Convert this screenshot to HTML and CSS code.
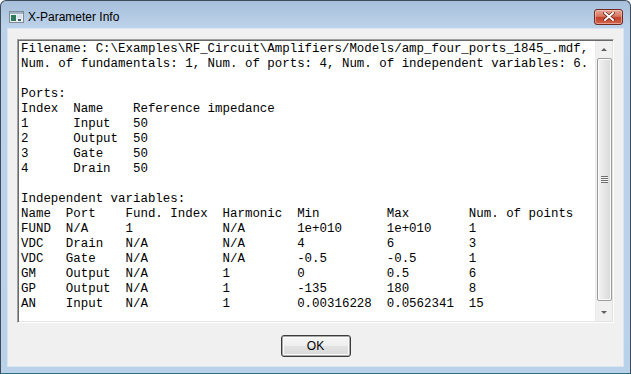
FILE: index.html
```html
<!DOCTYPE html>
<html lang="en">
<head>
    <meta charset="UTF-8">
    <title>X-Parameter Info</title>
    <link rel="stylesheet" href="styles.css">
</head>
<body>

    <div class="window">
        <div class="titlebar">
            <svg class="app-icon" width="15" height="12" viewBox="0 0 15 12">
                <rect x="0.5" y="0.5" width="14" height="11" fill="#e9eef3" stroke="#7d8b97"/>
                <rect x="1" y="1" width="13" height="2" fill="#9fb3c6"/>
                <rect x="2" y="4" width="5" height="6" fill="#2f7a5a"/>
                <rect x="8" y="4" width="5" height="3" fill="#d6e2ec"/>
                <rect x="9" y="8" width="3" height="2" fill="#4a5f73"/>
            </svg>
            <span class="title">X-Parameter Info</span>
            <button class="close" title="Close">
                <svg width="12" height="9" viewBox="0 0 12 9">
                    <path d="M2 1 L10 8 M10 1 L2 8" stroke="#5a1c14" stroke-width="3.2" stroke-linecap="square"/>
                    <path d="M2 1 L10 8 M10 1 L2 8" stroke="#ffffff" stroke-width="2" stroke-linecap="square"/>
                </svg>
            </button>
        </div>

        <div class="client">
            <div class="textbox">
<pre class="info">Filename: C:\Examples\RF_Circuit\Amplifiers/Models/amp_four_ports_1845_.mdf,
Num. of fundamentals: 1, Num. of ports: 4, Num. of independent variables: 6.

Ports:
Index  Name    Reference impedance
1      Input   50
2      Output  50
3      Gate    50
4      Drain   50

Independent variables:
Name  Port    Fund. Index  Harmonic  Min         Max        Num. of points
FUND  N/A     1            N/A       1e+010      1e+010     1
VDC   Drain   N/A          N/A       4           6          3
VDC   Gate    N/A          N/A       -0.5        -0.5       1
GM    Output  N/A          1         0           0.5        6
GP    Output  N/A          1         -135        180        8
AN    Input   N/A          1         0.00316228  0.0562341  15</pre>
                <div class="scrollbar">
                    <div class="arrow"><span class="tri up"></span></div>
                    <div class="thumb"><span class="grip"></span></div>
                    <div class="arrow"><span class="tri down"></span></div>
                </div>
            </div>
            <div class="footer">
                <button class="ok">OK</button>
            </div>
        </div>
    </div>

</body>
</html>
```

FILE: styles.css
```css
body {
    margin: 0;
    background: #ffffff;
}
.window {
    width: 631px;
    height: 374px;
    box-sizing: border-box;
    border: 1px solid #3e4c5a;
    border-bottom-color: #2c6f82;
    border-radius: 6px 6px 0 0;
    background: linear-gradient(#a7bfda, #bcd2ea 26px, #bad1ea);
    padding: 0 7px 7px;
    display: flex;
    flex-direction: column;
}
.titlebar {
    height: 28px;
    box-sizing: border-box;
    padding-top: 3px;
    display: flex;
    align-items: center;
}
.app-icon {
    margin-left: 1px;
    display: block;
}
.title {
    margin-left: 4px;
    font-family: "Liberation Sans", Arial, sans-serif;
    font-size: 12px;
    color: #000;
}
.close {
    margin-left: auto;
    width: 29px;
    height: 16px;
    padding: 0;
    border: 1px solid #6d2a22;
    border-radius: 3px;
    background: linear-gradient(#e9a797, #d8765f 45%, #c4402a 55%, #d1654d);
    box-shadow: inset 0 0 0 1px rgba(255, 220, 210, 0.5);
    display: flex;
    align-items: center;
    justify-content: center;
}
.close svg {
    display: block;
}
.client {
    flex: 1;
    background: #f0f0f0;
    padding: 10px 9px 0;
    box-shadow: 0 0 0 1px #d9e5f2;
}
.textbox {
    height: 284px;
    box-sizing: border-box;
    border: 1px solid;
    border-color: #a0a0a0 #ffffff #ffffff #a0a0a0;
    box-shadow: inset 1px 1px 0 #696969, inset -1px -1px 0 #e3e3e3;
    background: #ffffff;
    padding: 1px;
    display: flex;
}
.info {
    flex: 1;
    margin: 0;
    padding: 1px 0 0 2px;
    overflow: hidden;
    font-family: "Liberation Mono", "Courier New", monospace;
    font-size: 12.45px;
    line-height: 15px;
    color: #000;
}
.scrollbar {
    width: 17px;
    background: #f0f0f0;
    border-left: 1px solid #ececec;
    box-sizing: border-box;
    display: flex;
    flex-direction: column;
}
.arrow {
    height: 17px;
    display: flex;
    align-items: center;
    justify-content: center;
}
.tri {
    width: 0;
    height: 0;
    border-left: 3px solid transparent;
    border-right: 3px solid transparent;
}
.tri.up {
    border-bottom: 3px solid #606060;
}
.tri.down {
    border-top: 3px solid #606060;
}
.thumb {
    flex: 1;
    margin: 0 0 3px 1px;
    border: 1px solid #9b9b9b;
    border-radius: 2px;
    background: linear-gradient(90deg, #f3f3f3, #e6e6e6 50%, #d8d8d8);
    box-shadow: inset 0 0 0 1px #fbfbfb;
    display: flex;
    align-items: center;
    justify-content: center;
}
.grip {
    width: 7px;
    height: 7px;
    background: repeating-linear-gradient(#6f6f6f 0, #6f6f6f 1px, #f5f5f5 1px, #f5f5f5 2px);
}
.footer {
    margin-top: 12px;
    display: flex;
    justify-content: center;
}
.ok {
    width: 70px;
    height: 22px;
    padding: 0;
    border: 1px solid #3c3c3c;
    border-radius: 3px;
    background: linear-gradient(#f6f6f6, #eeeeee 50%, #e2e2e2 50%, #d9d9d9);
    box-shadow: inset 0 0 0 1px #a8a8a8, inset 0 0 0 2px #fafafa;
    font-family: "Liberation Sans", Arial, sans-serif;
    font-size: 12px;
    color: #000;
}
```
